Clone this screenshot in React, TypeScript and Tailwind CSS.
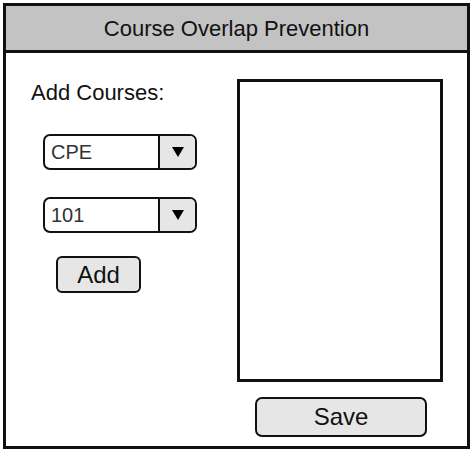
import React from "react";

const font = { fontFamily: '"Liberation Sans", Arial, sans-serif' };

function Dropdown({ value }: { value: string }) {
  return (
    <div className="ml-[37px] flex h-[36px] w-[154px] overflow-hidden rounded-[7px] border-2 border-[#111] bg-white">
      <div className="flex flex-1 items-center pl-[6px] text-[20px] text-[#333]">{value}</div>
      <div className="flex w-[37px] items-center justify-center border-l-2 border-[#111] bg-[#e6e6e6]">
        <svg width="12" height="10" viewBox="0 0 12 10">
          <polygon points="0,0 12,0 6,10" fill="#000" />
        </svg>
      </div>
    </div>
  );
}

export default function App() {
  return (
    <div className="bg-white pl-[3px] pt-[3px]" style={font}>
      <div className="flex h-[446px] w-[467px] flex-col border-[3px] border-[#111] bg-white shadow-[0_2px_0_#aaa]">
        {/* Header */}
        <div className="flex h-[47px] shrink-0 items-center justify-center border-b-[3px] border-[#111] bg-[#c3c3c3] text-[22px] text-[#111]">
          Course Overlap Prevention
        </div>

        <div className="flex flex-1">
          {/* Left column */}
          <div className="flex w-[231px] flex-col">
            <div className="ml-[25px] mt-[27px] text-[22px] leading-[26px] text-[#111]">Add Courses:</div>
            <div className="mt-[28px]">
              <Dropdown value="CPE" />
            </div>
            <div className="mt-[27px]">
              <Dropdown value="101" />
            </div>
            <button className="ml-[50px] mt-[23px] h-[37px] w-[85px] rounded-[6px] border-2 border-[#111] bg-[#e6e6e6] text-[24px] leading-none text-[#111]">
              Add
            </button>
          </div>

          {/* Right column */}
          <div className="flex flex-col">
            <div className="mt-[26px] h-[303px] w-[206px] border-[3px] border-[#111] bg-white" />
            <button className="ml-[18px] mt-[15px] h-[40px] w-[172px] rounded-[7px] border-2 border-[#111] bg-[#e6e6e6] text-[24px] leading-none text-[#111]">
              Save
            </button>
          </div>
        </div>
      </div>
    </div>
  );
}
